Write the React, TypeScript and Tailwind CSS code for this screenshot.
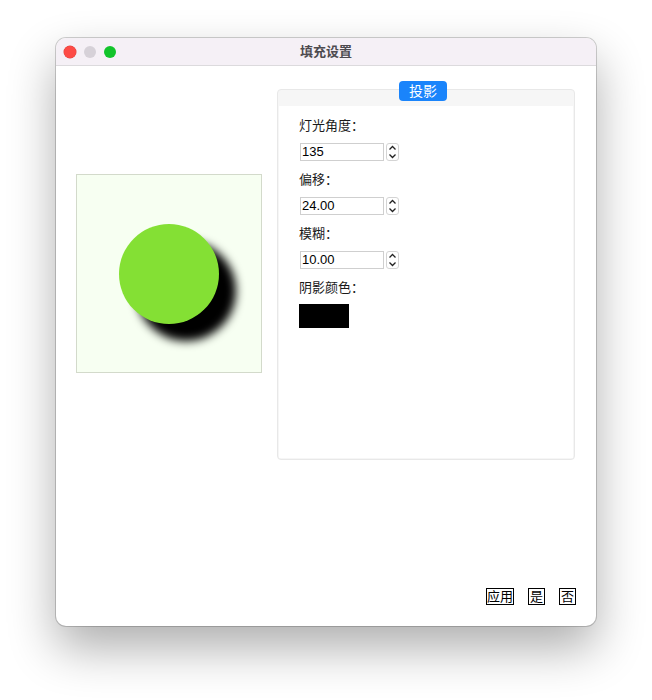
const CJK = "font-['Liberation_Sans','Noto_Sans_CJK_SC',sans-serif]";

function Stepper() {
  return (
    <div className="ml-[2px] flex h-[18px] w-[13px] flex-col items-center justify-between rounded-[3px] border border-[#d4d4d4] bg-white py-[1px]">
      <svg width="9" height="6" viewBox="0 0 9 6">
        <path d="M1.5 4.5 L4.5 1.5 L7.5 4.5" fill="none" stroke="#222" strokeWidth="1.3" />
      </svg>
      <svg width="9" height="6" viewBox="0 0 9 6">
        <path d="M1.5 1.5 L4.5 4.5 L7.5 1.5" fill="none" stroke="#222" strokeWidth="1.3" />
      </svg>
    </div>
  );
}

function Field({ label, value, first }: { label: string; value: string; first?: boolean }) {
  return (
    <div className={first ? "" : "mt-[10px]"}>
      <div className="h-[17px] text-[13px] leading-[17px] text-[#1a1a1a]">{label}</div>
      <div className="ml-[1px] mt-[9px] flex items-center">
        <div className="h-[18px] w-[84px] border border-[#cfcfcf] bg-white pl-[1px] text-[13px] leading-[16px] text-black">
          {value}
        </div>
        <Stepper />
      </div>
    </div>
  );
}

export default function App() {
  return (
    <div className={`min-h-[700px] bg-white pl-[56px] pt-[38px] ${CJK}`}>
      <div className="flex h-[588px] w-[540px] flex-col overflow-hidden rounded-[10px] bg-white shadow-[0_0_0_1px_rgba(0,0,0,0.18),0_22px_48px_rgba(0,0,0,0.32)]">
        <div className="relative flex h-[28px] items-center border-b border-[#dcdadd] bg-[#f5f0f6]">
          <div className="flex gap-[8px] pl-[8px]">
            <span className="h-[12px] w-[12px] rounded-full bg-[#fd4b46] ring-[0.5px] ring-[#e0443e]" />
            <span className="h-[12px] w-[12px] rounded-full bg-[#d6d1d8]" />
            <span className="h-[12px] w-[12px] rounded-full bg-[#12c42b]" />
          </div>
          <div className="absolute inset-0 flex items-center justify-center text-[13px] font-semibold text-[#4d4b4f]">
            填充设置
          </div>
        </div>

        <div className="flex flex-1 flex-col">
          <div className="flex items-start">
            <div className="ml-[20px] mt-[108px] flex h-[199px] w-[186px] items-center justify-center border border-[#d3dacb] bg-[#f7fff2]">
              <div className="h-[100px] w-[100px] rounded-full bg-[#84e034] shadow-[17px_17px_10px_#000]" />
            </div>

            <div className="relative ml-[15px] mt-[23px] flex h-[371px] w-[298px] flex-col rounded-[4px] border border-[#e8e8e8] bg-[#f6f6f6] px-[1px] pb-[1px] pt-[16px]">
              <div className="absolute left-[121px] top-[-9px] flex h-[20px] w-[48px] items-center justify-center rounded-[4px] bg-[#1a84fb] text-[14px] text-white">
                投影
              </div>
              <div className="flex-1 bg-white pl-[20px] pt-[11px]">
                <Field label="灯光角度：" value="135" first />
                <Field label="偏移：" value="24.00" />
                <Field label="模糊：" value="10.00" />
                <div className="mt-[10px] h-[17px] text-[13px] leading-[17px] text-[#1a1a1a]">阴影颜色：</div>
                <div className="mt-[8px] h-[24px] w-[50px] bg-black" />
              </div>
            </div>
          </div>

          <div className="mt-auto flex justify-end gap-[14px] pb-[21px] pr-[20px] text-[13px] leading-[15px] text-black">
            <div className="border border-black px-[0px]">应用</div>
            <div className="border border-black px-[1px]">是</div>
            <div className="border border-black px-[1px]">否</div>
          </div>
        </div>
      </div>
    </div>
  );
}
